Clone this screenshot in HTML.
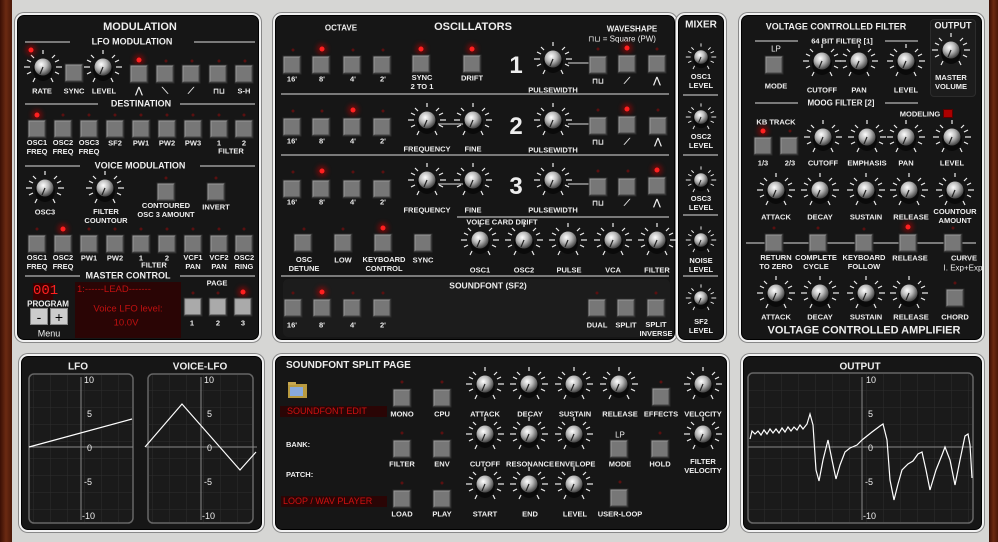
<!DOCTYPE html>
<html><head><meta charset="utf-8">
<style>
*{margin:0;padding:0;box-sizing:border-box}
body{width:998px;height:542px;overflow:hidden;position:relative;background:#d6d6d4;font-family:"Liberation Sans",sans-serif}
.wood{position:absolute;top:0;bottom:0;background:linear-gradient(90deg,#3a0f05,#6b2a12,#4a1808)}
.p{position:absolute;background:#161616;border:2px solid #f2f2f2;border-radius:9px;box-shadow:0 0 0 1px #888,inset 0 0 0 1px #000}
.t{position:absolute;transform:translate(-50%,-50%);color:#eee;font-weight:bold;font-size:7.5px;white-space:nowrap;text-align:center;line-height:9px}
.tl{position:absolute;color:#eee;font-weight:bold;font-size:7.5px;white-space:nowrap}
.h{font-size:11px;line-height:12px}
.b{position:absolute;width:17px;height:17px;transform:translate(-50%,-50%);background:#777;border:1px solid #9a9a9a;border-right-color:#444;border-bottom-color:#444;box-shadow:0 0 0 1px #2a2a2a}
.l{position:absolute;width:3px;height:3px;transform:translate(-50%,-50%);background:#5a1010;border-radius:50%}
.l.on{width:5px;height:5px;background:#ff2020;box-shadow:0 0 5px 3px rgba(200,0,0,.45)}
.rd{position:absolute;background:#2a0505;color:#d01010;font-size:10px;font-weight:normal}
.ln{position:absolute;height:1px;background:#ddd}
.big{font-size:24px;line-height:24px}
</style></head><body>
<div class="wood" style="left:0;width:12px"></div>
<div class="wood" style="left:989px;width:9px"></div>

<div class="p" style="left:15px;top:13px;width:246px;height:329px"></div>
<div class="p" style="left:273px;top:13px;width:404px;height:329px"></div>
<div class="p" style="left:676px;top:13px;width:50px;height:329px"></div>
<div class="p" style="left:739px;top:13px;width:245px;height:329px"></div>
<div class="p" style="left:19px;top:354px;width:245px;height:178px"></div>
<div class="p" style="left:273px;top:354px;width:456px;height:178px"></div>
<div class="p" style="left:741px;top:354px;width:243px;height:178px"></div>
<div style="position:absolute;left:283px;top:279px;width:387px;height:58px;background:#1c1c1c;border-radius:5px"></div>
<div style="position:absolute;left:930px;top:19px;width:46px;height:78px;background:#1c1c1c;border-radius:4px;border:1px solid #2c2c2c"></div>

<svg width="998" height="542" style="position:absolute;left:0;top:0">
<defs>
<radialGradient id="sv" cx="40%" cy="35%" r="70%"><stop offset="0" stop-color="#fff"/><stop offset=".45" stop-color="#bbb"/><stop offset="1" stop-color="#333"/></radialGradient>
<g id="k">
<g stroke="#eee" stroke-width="1.2">
<line x1="-13" y1="0" x2="-19" y2="0"/><line x1="13" y1="0" x2="19" y2="0"/>
<line x1="0" y1="-13" x2="0" y2="-17"/>
<line x1="-9" y1="-9" x2="-12" y2="-12"/><line x1="9" y1="-9" x2="12" y2="-12"/>
<line x1="-12" y1="5" x2="-16" y2="7"/><line x1="12" y1="5" x2="16" y2="7"/>
<line x1="-12" y1="-5" x2="-16" y2="-7"/><line x1="12" y1="-5" x2="16" y2="-7"/>
<line x1="-8" y1="11" x2="-10" y2="15"/><line x1="8" y1="11" x2="10" y2="15"/>
</g>
<ellipse cx="0" cy="3" rx="10" ry="11" fill="#0a0a0a"/>
<circle r="8.5" fill="url(#sv)"/>
<line x1="0" y1="0" x2="-3" y2="7" stroke="#222" stroke-width="1.2"/>
</g>
<pattern id="gr" width="17" height="17" patternUnits="userSpaceOnUse"><path d="M17 0V17H0" fill="none" stroke="#2e2e2e" stroke-width="1"/></pattern>
</defs>
<g stroke="#ddd" stroke-width="1">
<line x1="25" y1="42" x2="70" y2="42"/><line x1="194" y1="42" x2="255" y2="42"/>
<line x1="25" y1="104" x2="98" y2="104"/><line x1="180" y1="104" x2="255" y2="104"/>
<line x1="25" y1="166" x2="80" y2="166"/><line x1="200" y1="166" x2="255" y2="166"/>
<line x1="25" y1="276" x2="80" y2="276"/><line x1="180" y1="276" x2="255" y2="276"/>
<line x1="281" y1="94" x2="669" y2="94"/><line x1="281" y1="155" x2="669" y2="155"/>
<line x1="457" y1="217" x2="669" y2="217"/><line x1="281" y1="276" x2="669" y2="276"/>
<line x1="568" y1="63" x2="600" y2="63"/><line x1="568" y1="124" x2="600" y2="124"/><line x1="568" y1="184" x2="600" y2="184"/>
<line x1="438" y1="124" x2="466" y2="124"/><line x1="438" y1="184" x2="466" y2="184"/>
<line x1="683" y1="95" x2="718" y2="95"/><line x1="683" y1="155" x2="718" y2="155"/><line x1="683" y1="215" x2="718" y2="215"/><line x1="683" y1="276" x2="718" y2="276"/>
<line x1="755" y1="41" x2="798" y2="41"/><line x1="885" y1="41" x2="918" y2="41"/>
<line x1="755" y1="103" x2="798" y2="103"/><line x1="885" y1="103" x2="918" y2="103"/>
<line x1="746" y1="243" x2="976" y2="243"/>
</g>
<g>
<use href="#k" x="43" y="67"/><use href="#k" x="103" y="67"/>
<use href="#k" x="45" y="188"/><use href="#k" x="105" y="188"/>
<use href="#k" x="553" y="59"/><use href="#k" x="427" y="120"/><use href="#k" x="473" y="120"/><use href="#k" x="553" y="120"/>
<use href="#k" x="427" y="180"/><use href="#k" x="473" y="180"/><use href="#k" x="553" y="180"/>
<use href="#k" x="480" y="240"/><use href="#k" x="524" y="240"/><use href="#k" x="568" y="240"/><use href="#k" x="613" y="240"/><use href="#k" x="657" y="240"/>
<g transform="translate(701,57) scale(.8)"><use href="#k"/></g>
<g transform="translate(701,117) scale(.8)"><use href="#k"/></g>
<g transform="translate(701,180) scale(.8)"><use href="#k"/></g>
<g transform="translate(701,240) scale(.8)"><use href="#k"/></g>
<g transform="translate(701,298) scale(.8)"><use href="#k"/></g>
<use href="#k" x="822" y="61"/><use href="#k" x="859" y="61"/><use href="#k" x="906" y="61"/><use href="#k" x="951" y="50"/>
<use href="#k" x="823" y="137"/><use href="#k" x="867" y="137"/><use href="#k" x="906" y="137"/><use href="#k" x="952" y="137"/>
<use href="#k" x="776" y="190"/><use href="#k" x="820" y="190"/><use href="#k" x="866" y="190"/><use href="#k" x="909" y="190"/><use href="#k" x="955" y="190"/>
<use href="#k" x="776" y="293"/><use href="#k" x="820" y="293"/><use href="#k" x="866" y="293"/><use href="#k" x="909" y="293"/>
<use href="#k" x="485" y="384"/><use href="#k" x="529" y="384"/><use href="#k" x="574" y="384"/><use href="#k" x="619" y="384"/><use href="#k" x="703" y="384"/>
<use href="#k" x="485" y="434"/><use href="#k" x="529" y="434"/><use href="#k" x="574" y="434"/><use href="#k" x="703" y="434"/>
<use href="#k" x="485" y="484"/><use href="#k" x="529" y="484"/><use href="#k" x="574" y="484"/>
</g>
<!-- screens -->
<g stroke="#666" stroke-width="1.5">
<rect x="29" y="374" width="104" height="149" rx="5" fill="#1a1a1a"/>
<rect x="148" y="374" width="105" height="149" rx="5" fill="#1a1a1a"/>
<rect x="748" y="373" width="225" height="150" rx="5" fill="#1a1a1a"/>
</g>
<rect x="30" y="375" width="102" height="147" fill="url(#gr)"/>
<rect x="149" y="375" width="103" height="147" fill="url(#gr)"/>
<rect x="749" y="374" width="223" height="148" fill="url(#gr)"/>
<g stroke="#888" stroke-width="1">
<line x1="81" y1="377" x2="81" y2="520"/><line x1="29" y1="447" x2="133" y2="447"/>
<line x1="201" y1="377" x2="201" y2="520"/><line x1="146" y1="447" x2="257" y2="447"/>
<line x1="862" y1="377" x2="862" y2="520"/><line x1="748" y1="447" x2="973" y2="447"/>
</g>
<g stroke="#fff" stroke-width="1.2" fill="none">
<line x1="29" y1="447" x2="132" y2="419"/>
<polyline points="145,447 182,404 240,470 256,452"/>
<polyline points="750,439 752,431 755,434 758,431 761,435 764,430 767,434 770,429 773,433 776,429 779,433 782,428 785,432 788,427 791,431 794,427 797,430 800,425 803,429 807,424 810,414 813,425 816,470 819,481 823,460 828,440 832,460 836,479 840,465 845,452 850,448 857,445 862,440 872,432 880,426 883,424 887,440 890,480 894,500 898,484 902,470 908,464 913,461 918,454 922,452 926,470 930,490 936,470 942,455 945,447 950,460 955,485 960,460 965,436 968,434 970,445 972,478"/>
</g>
<!-- folder icon -->
<rect x="288" y="384" width="19" height="14" fill="#b89a40"/><rect x="290" y="387" width="13" height="9" fill="#8ad"/><rect x="288" y="382" width="8" height="3" fill="#c8a850"/>
</svg>

<!-- MODULATION -->
<div class="t h" style="left:140px;top:27px">MODULATION</div>
<div class="t" style="left:132px;top:42px;font-size:9px">LFO MODULATION</div>
<div class="l on" style="left:31px;top:50px"></div>
<div class="b" style="left:74px;top:73px"></div>
<div class="t" style="left:42px;top:91px">RATE</div><div class="t" style="left:74px;top:91px">SYNC</div><div class="t" style="left:104px;top:91px">LEVEL</div>
<div class="l on" style="left:139px;top:60px"></div><div class="l" style="left:166px;top:61px"></div><div class="l" style="left:192px;top:61px"></div><div class="l" style="left:219px;top:61px"></div><div class="l" style="left:245px;top:61px"></div>
<div class="b" style="left:139px;top:74px"></div><div class="b" style="left:165px;top:74px"></div><div class="b" style="left:191px;top:74px"></div><div class="b" style="left:218px;top:74px"></div><div class="b" style="left:244px;top:74px"></div>
<div class="t" style="left:139px;top:91px;font-size:9px">⋀</div><div class="t" style="left:165px;top:91px;font-size:9px">⟍</div><div class="t" style="left:191px;top:91px;font-size:9px">⟋</div><div class="t" style="left:219px;top:91px">⊓⊔</div><div class="t" style="left:244px;top:91px">S-H</div>
<div class="t" style="left:141px;top:104px;font-size:9px">DESTINATION</div>
<div class="l on" style="left:37px;top:115px"></div><div class="l" style="left:63px;top:115px"></div><div class="l" style="left:89px;top:115px"></div><div class="l" style="left:115px;top:115px"></div><div class="l" style="left:141px;top:115px"></div><div class="l" style="left:167px;top:115px"></div><div class="l" style="left:193px;top:115px"></div><div class="l" style="left:219px;top:115px"></div><div class="l" style="left:244px;top:115px"></div>
<div class="b" style="left:37px;top:129px"></div><div class="b" style="left:63px;top:129px"></div><div class="b" style="left:89px;top:129px"></div><div class="b" style="left:115px;top:129px"></div><div class="b" style="left:141px;top:129px"></div><div class="b" style="left:167px;top:129px"></div><div class="b" style="left:193px;top:129px"></div><div class="b" style="left:219px;top:129px"></div><div class="b" style="left:244px;top:129px"></div>
<div class="t" style="left:37px;top:147px">OSC1<br>FREQ</div><div class="t" style="left:63px;top:147px">OSC2<br>FREQ</div><div class="t" style="left:89px;top:147px">OSC3<br>FREQ</div><div class="t" style="left:115px;top:143px">SF2</div><div class="t" style="left:141px;top:143px">PW1</div><div class="t" style="left:167px;top:143px">PW2</div><div class="t" style="left:193px;top:143px">PW3</div><div class="t" style="left:219px;top:143px">1</div><div class="t" style="left:244px;top:143px">2</div><div class="t" style="left:231px;top:151px">FILTER</div>
<div class="t" style="left:140px;top:166px;font-size:9px">VOICE MODULATION</div>
<div class="t" style="left:45px;top:212px">OSC3</div><div class="t" style="left:106px;top:216px">FILTER<br>COUNTOUR</div>
<div class="l" style="left:166px;top:178px"></div><div class="b" style="left:166px;top:192px"></div><div class="t" style="left:166px;top:210px">CONTOURED<br>OSC 3 AMOUNT</div>
<div class="l" style="left:216px;top:178px"></div><div class="b" style="left:216px;top:192px"></div><div class="t" style="left:216px;top:207px">INVERT</div>
<div class="l" style="left:37px;top:229px"></div><div class="l on" style="left:63px;top:229px"></div><div class="l" style="left:89px;top:229px"></div><div class="l" style="left:115px;top:229px"></div><div class="l" style="left:141px;top:229px"></div><div class="l" style="left:167px;top:229px"></div><div class="l" style="left:193px;top:229px"></div><div class="l" style="left:219px;top:229px"></div><div class="l" style="left:244px;top:229px"></div>
<div class="b" style="left:37px;top:244px"></div><div class="b" style="left:63px;top:244px"></div><div class="b" style="left:89px;top:244px"></div><div class="b" style="left:115px;top:244px"></div><div class="b" style="left:141px;top:244px"></div><div class="b" style="left:167px;top:244px"></div><div class="b" style="left:193px;top:244px"></div><div class="b" style="left:219px;top:244px"></div><div class="b" style="left:244px;top:244px"></div>
<div class="t" style="left:37px;top:262px">OSC1<br>FREQ</div><div class="t" style="left:63px;top:262px">OSC2<br>FREQ</div><div class="t" style="left:89px;top:258px">PW1</div><div class="t" style="left:115px;top:258px">PW2</div><div class="t" style="left:141px;top:258px">1</div><div class="t" style="left:167px;top:258px">2</div><div class="t" style="left:193px;top:262px">VCF1<br>PAN</div><div class="t" style="left:219px;top:262px">VCF2<br>PAN</div><div class="t" style="left:244px;top:262px">OSC2<br>RING</div><div class="t" style="left:154px;top:265px">FILTER</div>
<div class="t" style="left:128px;top:276px;font-size:9px">MASTER CONTROL</div>
<div style="position:absolute;left:33px;top:283px;width:20px;height:17px;background:#3a0000;color:#ff2020;font-size:14px;line-height:17px;text-align:center;font-family:'Liberation Mono',monospace">001</div>
<div class="t" style="left:48px;top:304px;font-size:8px">PROGRAM</div>
<div style="position:absolute;left:30px;top:308px;width:18px;height:17px;background:#ccc;color:#000;font-size:14px;text-align:center;line-height:16px;border:1px solid #888">-</div>
<div style="position:absolute;left:50px;top:308px;width:18px;height:17px;background:#ccc;color:#000;font-size:14px;text-align:center;line-height:16px;border:1px solid #888">+</div>
<div class="t" style="left:49px;top:334px;font-weight:normal;font-size:9px">Menu</div>
<div class="rd" style="left:75px;top:282px;width:106px;height:56px"></div>
<div style="position:absolute;left:77px;top:284px;color:#c01010;font-size:9.5px">1:------LEAD-------</div>
<div class="t" style="left:128px;top:309px;color:#c01010;font-weight:normal;font-size:9.5px">Voice LFO level:</div>
<div class="t" style="left:126px;top:323px;color:#c01010;font-weight:normal;font-size:9.5px">10.0V</div>
<div class="t" style="left:217px;top:283px">PAGE</div>
<div class="l" style="left:193px;top:293px"></div><div class="l" style="left:218px;top:293px"></div><div class="l on" style="left:243px;top:292px"></div>
<div class="b" style="left:193px;top:307px;background:#aaa"></div><div class="b" style="left:218px;top:307px;background:#aaa"></div><div class="b" style="left:243px;top:307px;background:#aaa"></div>
<div class="t" style="left:192px;top:323px">1</div><div class="t" style="left:218px;top:323px">2</div><div class="t" style="left:243px;top:323px">3</div>

<!-- OSCILLATORS -->
<div class="t" style="left:341px;top:28px;font-size:8px">OCTAVE</div>
<div class="t h" style="left:473px;top:27px">OSCILLATORS</div>
<div class="t" style="left:632px;top:29px;font-size:8px">WAVESHAPE</div>
<div class="t" style="left:622px;top:39px;font-weight:normal;font-size:8px">⊓⊔ = Square (PW)</div>
<div class="l" style="left:293px;top:50px"></div><div class="l on" style="left:322px;top:49px"></div><div class="l" style="left:353px;top:50px"></div><div class="l" style="left:383px;top:50px"></div><div class="l on" style="left:421px;top:49px"></div><div class="l on" style="left:472px;top:49px"></div>
<div class="b" style="left:292px;top:65px"></div><div class="b" style="left:321px;top:65px"></div><div class="b" style="left:352px;top:65px"></div><div class="b" style="left:382px;top:65px"></div><div class="b" style="left:421px;top:64px"></div><div class="b" style="left:472px;top:64px"></div>
<div class="t" style="left:292px;top:79px">16'</div><div class="t" style="left:322px;top:79px">8'</div><div class="t" style="left:353px;top:79px">4'</div><div class="t" style="left:383px;top:79px">2'</div><div class="t" style="left:422px;top:82px">SYNC<br>2 TO 1</div><div class="t" style="left:472px;top:78px">DRIFT</div>
<div class="t big" style="left:516px;top:66px">1</div><div class="t big" style="left:516px;top:127px">2</div><div class="t big" style="left:516px;top:187px">3</div>
<div class="t" style="left:553px;top:90px">PULSEWIDTH</div><div class="t" style="left:553px;top:150px">PULSEWIDTH</div><div class="t" style="left:553px;top:210px">PULSEWIDTH</div>
<div class="t" style="left:427px;top:149px">FREQUENCY</div><div class="t" style="left:473px;top:149px">FINE</div><div class="t" style="left:427px;top:210px">FREQUENCY</div><div class="t" style="left:473px;top:210px">FINE</div>
<div class="l" style="left:598px;top:49px"></div><div class="l on" style="left:627px;top:48px"></div><div class="l" style="left:657px;top:49px"></div>
<div class="b" style="left:598px;top:65px"></div><div class="b" style="left:627px;top:64px"></div><div class="b" style="left:657px;top:64px"></div>
<div class="t" style="left:598px;top:81px">⊓⊔</div><div class="t" style="left:627px;top:81px;font-size:9px">⟋</div><div class="t" style="left:657px;top:81px;font-size:9px">⋀</div>
<div class="l" style="left:293px;top:111px"></div><div class="l" style="left:322px;top:111px"></div><div class="l on" style="left:353px;top:110px"></div><div class="l" style="left:383px;top:111px"></div>
<div class="b" style="left:292px;top:127px"></div><div class="b" style="left:321px;top:127px"></div><div class="b" style="left:352px;top:127px"></div><div class="b" style="left:382px;top:127px"></div>
<div class="t" style="left:292px;top:141px">16'</div><div class="t" style="left:322px;top:141px">8'</div><div class="t" style="left:353px;top:141px">4'</div><div class="t" style="left:383px;top:141px">2'</div>
<div class="l" style="left:598px;top:110px"></div><div class="l on" style="left:627px;top:109px"></div><div class="l" style="left:658px;top:110px"></div>
<div class="b" style="left:598px;top:126px"></div><div class="b" style="left:627px;top:125px"></div><div class="b" style="left:658px;top:126px"></div>
<div class="t" style="left:598px;top:142px">⊓⊔</div><div class="t" style="left:627px;top:142px;font-size:9px">⟋</div><div class="t" style="left:658px;top:142px;font-size:9px">⋀</div>
<div class="l" style="left:293px;top:172px"></div><div class="l on" style="left:322px;top:171px"></div><div class="l" style="left:353px;top:172px"></div><div class="l" style="left:383px;top:172px"></div>
<div class="b" style="left:292px;top:189px"></div><div class="b" style="left:321px;top:189px"></div><div class="b" style="left:352px;top:189px"></div><div class="b" style="left:382px;top:189px"></div>
<div class="t" style="left:292px;top:202px">16'</div><div class="t" style="left:322px;top:202px">8'</div><div class="t" style="left:353px;top:202px">4'</div><div class="t" style="left:383px;top:202px">2'</div>
<div class="l" style="left:598px;top:171px"></div><div class="l" style="left:628px;top:171px"></div><div class="l on" style="left:657px;top:170px"></div>
<div class="b" style="left:598px;top:187px"></div><div class="b" style="left:627px;top:187px"></div><div class="b" style="left:657px;top:186px"></div>
<div class="t" style="left:598px;top:203px">⊓⊔</div><div class="t" style="left:627px;top:203px;font-size:9px">⟋</div><div class="t" style="left:657px;top:203px;font-size:9px">⋀</div>
<div class="t" style="left:502px;top:222px">VOICE CARD DRIFT</div>
<div class="l" style="left:304px;top:229px"></div><div class="l" style="left:343px;top:229px"></div><div class="l on" style="left:383px;top:228px"></div>
<div class="b" style="left:303px;top:243px"></div><div class="b" style="left:343px;top:243px"></div><div class="b" style="left:383px;top:243px"></div><div class="b" style="left:423px;top:243px"></div>
<div class="t" style="left:304px;top:264px">OSC<br>DETUNE</div><div class="t" style="left:343px;top:260px">LOW</div><div class="t" style="left:384px;top:264px">KEYBOARD<br>CONTROL</div><div class="t" style="left:423px;top:260px">SYNC</div>
<div class="t" style="left:480px;top:270px">OSC1</div><div class="t" style="left:524px;top:270px">OSC2</div><div class="t" style="left:569px;top:270px">PULSE</div><div class="t" style="left:613px;top:270px">VCA</div><div class="t" style="left:657px;top:270px">FILTER</div>
<div class="t" style="left:488px;top:286px;font-size:8.5px">SOUNDFONT (SF2)</div>
<div class="l" style="left:293px;top:293px"></div><div class="l on" style="left:322px;top:292px"></div><div class="l" style="left:353px;top:293px"></div><div class="l" style="left:383px;top:293px"></div>
<div class="b" style="left:293px;top:308px"></div><div class="b" style="left:322px;top:308px"></div><div class="b" style="left:352px;top:308px"></div><div class="b" style="left:382px;top:308px"></div>
<div class="t" style="left:292px;top:325px">16'</div><div class="t" style="left:322px;top:325px">8'</div><div class="t" style="left:353px;top:325px">4'</div><div class="t" style="left:383px;top:325px">2'</div>
<div class="l" style="left:597px;top:293px"></div><div class="l" style="left:656px;top:293px"></div>
<div class="b" style="left:597px;top:308px"></div><div class="b" style="left:626px;top:308px"></div><div class="b" style="left:656px;top:308px"></div>
<div class="t" style="left:597px;top:325px">DUAL</div><div class="t" style="left:626px;top:325px">SPLIT</div><div class="t" style="left:656px;top:329px">SPLIT<br>INVERSE</div>

<!-- MIXER -->
<div class="t" style="left:701px;top:25px;font-size:10px">MIXER</div>
<div class="t" style="left:701px;top:81px">OSC1<br>LEVEL</div><div class="t" style="left:701px;top:141px">OSC2<br>LEVEL</div><div class="t" style="left:701px;top:203px">OSC3<br>LEVEL</div><div class="t" style="left:701px;top:265px">NOISE<br>LEVEL</div><div class="t" style="left:701px;top:326px">SF2<br>LEVEL</div>

<!-- VCF -->
<div class="t" style="left:836px;top:27px;font-size:9px">VOLTAGE CONTROLLED FILTER</div>
<div class="t" style="left:953px;top:26px;font-size:9px">OUTPUT</div>
<div class="t" style="left:842px;top:41px">64 BIT FILTER [1]</div>
<div class="t" style="left:776px;top:49px;font-weight:normal;font-size:8px">LP</div>
<div class="b" style="left:774px;top:65px"></div><div class="t" style="left:776px;top:86px">MODE</div>
<div class="t" style="left:822px;top:90px">CUTOFF</div><div class="t" style="left:859px;top:90px">PAN</div><div class="t" style="left:906px;top:90px">LEVEL</div>
<div class="t" style="left:951px;top:82px">MASTER<br>VOLUME</div>
<div class="t" style="left:841px;top:103px;font-size:8px">MOOG FILTER [2]</div>
<div class="t" style="left:920px;top:114px">MODELING</div>
<div style="position:absolute;left:943px;top:109px;width:10px;height:9px;background:#a00;border:1px solid #500"></div>
<div class="t" style="left:776px;top:122px">KB TRACK</div>
<div class="l on" style="left:763px;top:131px"></div><div class="l" style="left:790px;top:131px"></div>
<div class="b" style="left:763px;top:146px"></div><div class="b" style="left:789px;top:146px"></div>
<div class="t" style="left:763px;top:163px">1/3</div><div class="t" style="left:790px;top:163px">2/3</div>
<div class="t" style="left:823px;top:163px">CUTOFF</div><div class="t" style="left:867px;top:163px">EMPHASIS</div><div class="t" style="left:906px;top:163px">PAN</div><div class="t" style="left:952px;top:163px">LEVEL</div>
<div class="t" style="left:776px;top:217px">ATTACK</div><div class="t" style="left:820px;top:217px">DECAY</div><div class="t" style="left:866px;top:217px">SUSTAIN</div><div class="t" style="left:911px;top:217px">RELEASE</div><div class="t" style="left:955px;top:216px">COUNTOUR<br>AMOUNT</div>
<div class="l" style="left:774px;top:228px"></div><div class="l" style="left:818px;top:228px"></div><div class="l" style="left:864px;top:229px"></div><div class="l on" style="left:908px;top:227px"></div><div class="l" style="left:953px;top:228px"></div>
<div class="b" style="left:774px;top:243px"></div><div class="b" style="left:818px;top:243px"></div><div class="b" style="left:864px;top:243px"></div><div class="b" style="left:908px;top:243px"></div><div class="b" style="left:953px;top:243px"></div>
<div class="t" style="left:776px;top:262px">RETURN<br>TO ZERO</div><div class="t" style="left:816px;top:262px">COMPLETE<br>CYCLE</div><div class="t" style="left:864px;top:262px">KEYBOARD<br>FOLLOW</div><div class="t" style="left:910px;top:258px">RELEASE</div><div class="t" style="left:964px;top:258px">CURVE</div>
<div class="t" style="left:963px;top:268px;font-weight:normal;font-size:8px">I. Exp+Exp</div>
<div class="l" style="left:955px;top:283px"></div><div class="b" style="left:955px;top:298px"></div>
<div class="t" style="left:776px;top:317px">ATTACK</div><div class="t" style="left:820px;top:317px">DECAY</div><div class="t" style="left:866px;top:317px">SUSTAIN</div><div class="t" style="left:911px;top:317px">RELEASE</div><div class="t" style="left:955px;top:317px">CHORD</div>
<div class="t" style="left:864px;top:331px;font-size:11px">VOLTAGE CONTROLLED AMPLIFIER</div>

<!-- LFO displays -->
<div class="t" style="left:78px;top:367px;font-size:10px">LFO</div><div class="t" style="left:200px;top:367px;font-size:10px">VOICE-LFO</div>
<div class="tl" style="left:84px;top:375px;font-weight:normal;font-size:9px">10</div><div class="tl" style="left:87px;top:409px;font-weight:normal;font-size:9px">5</div><div class="tl" style="left:87px;top:443px;font-weight:normal;font-size:9px">0</div><div class="tl" style="left:84px;top:477px;font-weight:normal;font-size:9px">-5</div><div class="tl" style="left:82px;top:511px;font-weight:normal;font-size:9px">-10</div>
<div class="tl" style="left:204px;top:375px;font-weight:normal;font-size:9px">10</div><div class="tl" style="left:207px;top:409px;font-weight:normal;font-size:9px">5</div><div class="tl" style="left:207px;top:443px;font-weight:normal;font-size:9px">0</div><div class="tl" style="left:204px;top:477px;font-weight:normal;font-size:9px">-5</div><div class="tl" style="left:202px;top:511px;font-weight:normal;font-size:9px">-10</div>

<!-- SOUNDFONT SPLIT -->
<div class="tl" style="left:286px;top:360px;font-size:10px">SOUNDFONT SPLIT PAGE</div>
<div class="rd" style="left:280px;top:406px;width:107px;height:11px;line-height:11px;font-size:9px;padding-left:7px">SOUNDFONT EDIT</div>
<div class="tl" style="left:286px;top:440px">BANK:</div><div class="tl" style="left:286px;top:470px">PATCH:</div>
<div class="rd" style="left:281px;top:496px;width:106px;height:11px;line-height:11px;font-size:9px;padding-left:2px">LOOP / WAV PLAYER</div>
<div class="l" style="left:402px;top:382px"></div><div class="l" style="left:442px;top:382px"></div>
<div class="b" style="left:402px;top:398px"></div><div class="b" style="left:442px;top:398px"></div>
<div class="t" style="left:402px;top:414px">MONO</div><div class="t" style="left:442px;top:414px">CPU</div>
<div class="l" style="left:402px;top:433px"></div><div class="l" style="left:442px;top:433px"></div>
<div class="b" style="left:402px;top:449px"></div><div class="b" style="left:442px;top:449px"></div>
<div class="t" style="left:402px;top:464px">FILTER</div><div class="t" style="left:442px;top:464px">ENV</div>
<div class="l" style="left:402px;top:483px"></div><div class="l" style="left:442px;top:483px"></div>
<div class="b" style="left:402px;top:499px"></div><div class="b" style="left:442px;top:499px"></div>
<div class="t" style="left:402px;top:514px">LOAD</div><div class="t" style="left:442px;top:514px">PLAY</div>
<div class="t" style="left:485px;top:414px">ATTACK</div><div class="t" style="left:530px;top:414px">DECAY</div><div class="t" style="left:575px;top:414px">SUSTAIN</div><div class="t" style="left:620px;top:414px">RELEASE</div><div class="t" style="left:661px;top:414px">EFFECTS</div><div class="t" style="left:703px;top:414px">VELOCITY</div>
<div class="l" style="left:661px;top:382px"></div><div class="b" style="left:661px;top:397px"></div>
<div class="t" style="left:485px;top:464px">CUTOFF</div><div class="t" style="left:530px;top:464px">RESONANCE</div><div class="t" style="left:575px;top:464px">ENVELOPE</div><div class="t" style="left:620px;top:464px">MODE</div><div class="t" style="left:660px;top:464px">HOLD</div><div class="t" style="left:703px;top:466px">FILTER<br>VELOCITY</div>
<div class="t" style="left:620px;top:435px;font-weight:normal;font-size:8px">LP</div><div class="b" style="left:619px;top:449px"></div>
<div class="l" style="left:660px;top:433px"></div><div class="b" style="left:660px;top:449px"></div>
<div class="t" style="left:485px;top:514px">START</div><div class="t" style="left:530px;top:514px">END</div><div class="t" style="left:575px;top:514px">LEVEL</div><div class="t" style="left:620px;top:514px">USER-LOOP</div>
<div class="l" style="left:620px;top:482px"></div><div class="b" style="left:619px;top:498px"></div>

<!-- OUTPUT -->
<div class="t" style="left:860px;top:367px;font-size:10px">OUTPUT</div>
<div class="tl" style="left:866px;top:375px;font-weight:normal;font-size:9px">10</div><div class="tl" style="left:868px;top:409px;font-weight:normal;font-size:9px">5</div><div class="tl" style="left:868px;top:443px;font-weight:normal;font-size:9px">0</div><div class="tl" style="left:865px;top:477px;font-weight:normal;font-size:9px">-5</div><div class="tl" style="left:863px;top:511px;font-weight:normal;font-size:9px">-10</div>
</body></html>
